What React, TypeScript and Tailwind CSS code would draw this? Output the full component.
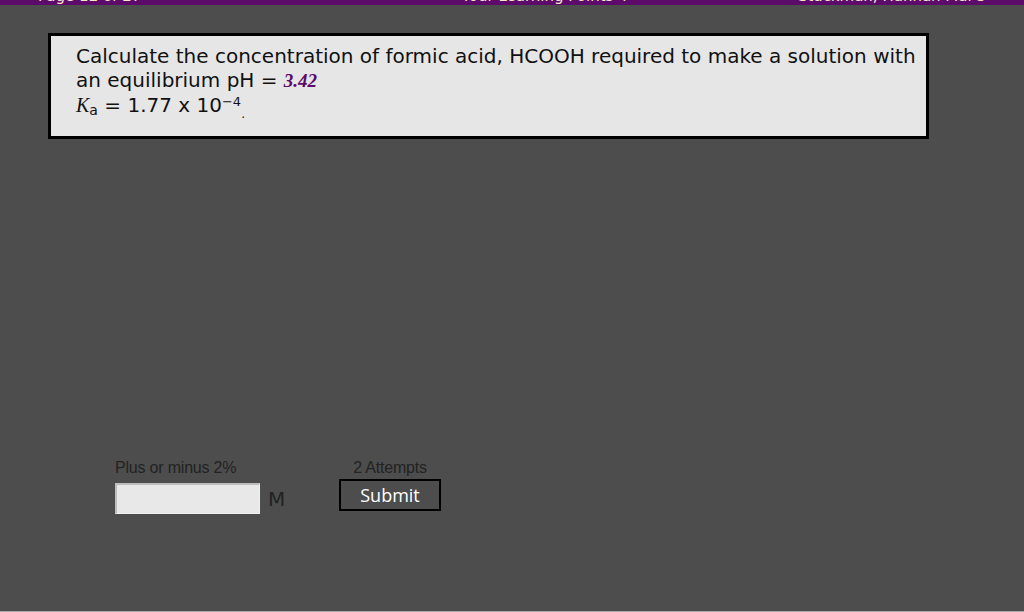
import React from "react";

const App: React.FC = () => {
  return (
    <div className="w-[1024px] h-[612px] bg-[#4d4d4d] overflow-hidden flex flex-col">
      {/* Top bar (scrolled, mostly cut off) */}
      <div className="h-[5px] bg-[#5c0b6a] overflow-hidden shrink-0">
        <div className="flex justify-between px-[38px] -mt-[11px] text-[15px] text-[#f5e6c8] [font-family:'DejaVu_Sans',sans-serif] leading-[15px]">
          <span>Page 12 of 27</span>
          <span className="ml-[150px]">Your Learning Points 4</span>
          <span>Stackman, Hannah Mai 3</span>
        </div>
      </div>

      {/* Question */}
      <div className="ml-[48px] mt-[28px] w-[881px] h-[106px] border-[3px] border-black bg-[#e6e6e6] pl-[25px] pt-[8px] [font-family:'DejaVu_Sans',sans-serif] text-[20px] leading-[24px] text-[#111] whitespace-nowrap">
        <p>Calculate the concentration of formic acid, HCOOH required to make a solution with</p>
        <p>
          an equilibrium pH ={" "}
          <span className="[font-family:'Liberation_Serif',serif] italic font-bold text-[19px] text-[#5c0b6a]">3.42</span>
        </p>
        <p>
          <span className="[font-family:'Liberation_Serif',serif] italic">K</span>
          <sub className="text-[14px] relative top-[3px]">a</sub> = 1.77 x 10
          <sup className="text-[13px]">−4</sup>
          <span className="text-[12px] relative top-[6px]">.</span>
        </p>
      </div>

      {/* Answer */}
      <div className="flex mt-[321px] ml-[115px] [font-family:'Liberation_Sans',sans-serif] text-[#222]">
        <div className="flex flex-col w-[224px]">
          <span className="text-[16px] leading-[16px] tracking-[-0.2px]">Plus or minus 2%</span>
          <div className="flex items-center mt-[7px]">
            <input
              type="text"
              className="w-[145px] h-[31px] bg-[#e8e8e8] border-t-2 border-l-2 border-[#bdbdbd] border-b border-r border-b-[#f0f0f0] border-r-[#f0f0f0] outline-none"
            />
            <span className="ml-[8px] text-[20px] text-[#222] [font-family:'DejaVu_Sans',sans-serif]">M</span>
          </div>
        </div>
        <div className="flex flex-col items-center w-[102px]">
          <span className="text-[16px] leading-[16px] tracking-[-0.2px] whitespace-nowrap">2 Attempts</span>
          <button className="mt-[3px] w-[102px] h-[32px] border-2 border-black bg-[#4d4d4d] text-white text-[18px] font-medium [font-family:'Open_Sans',sans-serif]">
            Submit
          </button>
        </div>
      </div>
      <div className="mt-auto h-px bg-[#aaaaaa]" />
    </div>
  );
};

export default App;
